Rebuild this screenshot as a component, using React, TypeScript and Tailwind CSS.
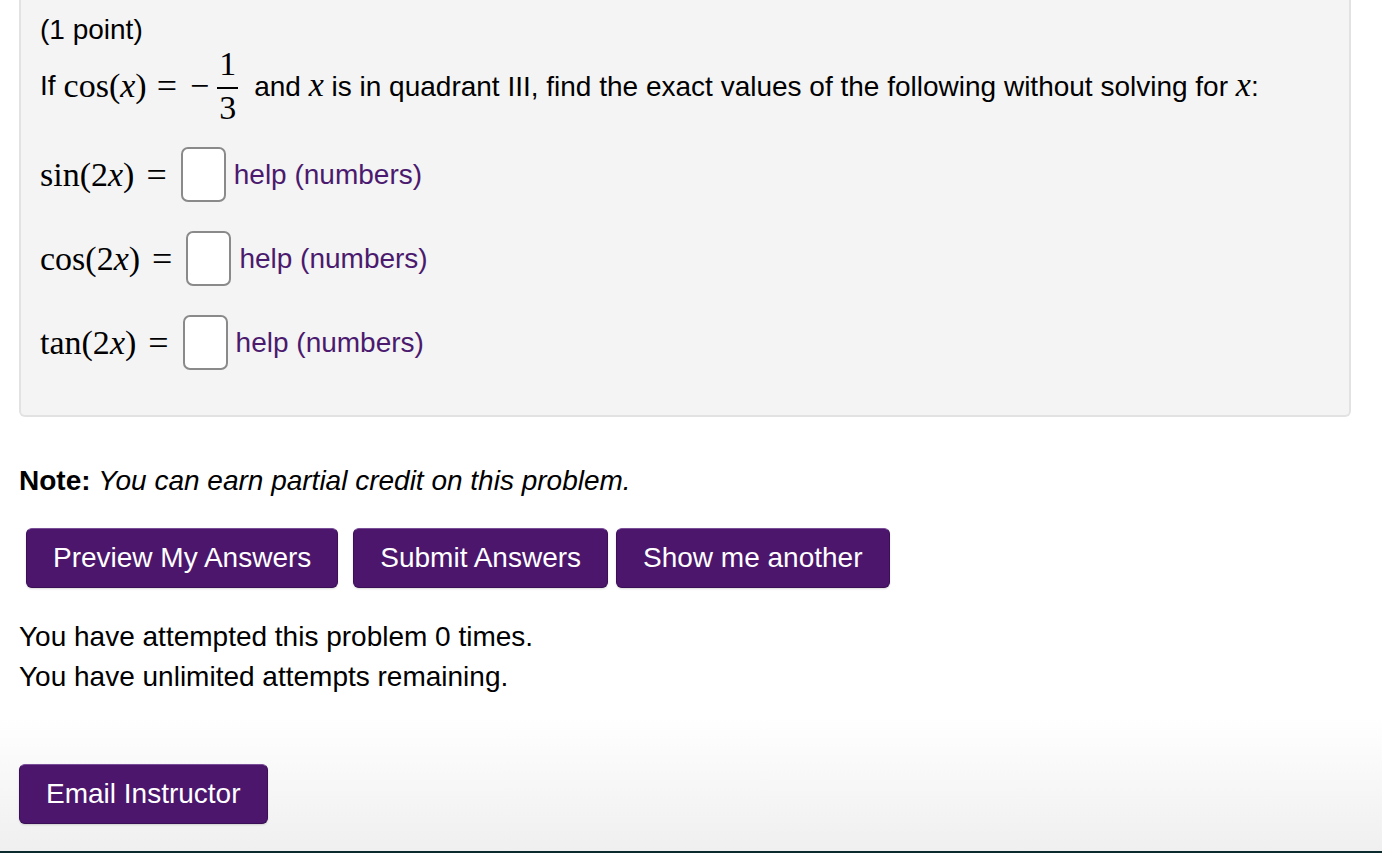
import React from "react";

const sans = "font-['Liberation_Sans',Arial,sans-serif]";
const serif = "font-['Liberation_Serif','Times_New_Roman',serif]";

function V({ children }: { children: React.ReactNode }) {
  return <span className={`${serif} italic`}>{children}</span>;
}

function AnswerRow({ fn }: { fn: string }) {
  return (
    <div className="flex h-[55px] items-center">
      <span className={`${serif} text-[34px] leading-none text-black`}>
        {fn}(2<V>x</V>)
      </span>
      <span className={`${serif} ml-[12px] mr-[14px] text-[36px] leading-none`}>=</span>
      <input
        type="text"
        className="h-[55px] w-[45px] rounded-[7px] border-2 border-[#8a8a8a] bg-white outline-none"
      />
      <a href="#" className="ml-2 text-[#4b1a6e]">
        help (numbers)
      </a>
    </div>
  );
}

function PurpleButton({ label, className = "" }: { label: string; className?: string }) {
  return (
    <button
      className={`h-[60px] rounded-[6px] border border-[#3a0f56] border-t-[#7a4d98] bg-[#4b166c] px-[26px] text-[28px] text-white shadow-[0_1px_2px_rgba(0,0,0,0.15)] ${className}`}
    >
      {label}
    </button>
  );
}

export default function App() {
  return (
    <div
      className={`${sans} relative min-h-[853px] overflow-hidden bg-gradient-to-b from-white from-[84%] to-[#efefef] text-[28px] leading-[40px] text-black`}
    >
      {/* problem box */}
      <div className="ml-[19px] w-[1332px] rounded-b-[6px] border-2 border-t-0 border-[#e2e2e2] bg-[#f4f4f4] px-[19px] pb-[45px] pt-[10px]">
        <div>(1 point)</div>

        <div className="flex h-[72px] items-center">
          <span>If</span>
          <span className={`${serif} ml-[8px] text-[34px] leading-none`}>
            cos(<V>x</V>)
          </span>
          <span className={`${serif} ml-[10px] mr-[13px] text-[36px] leading-none`}>=</span>
          <span className={`${serif} text-[34px] leading-none`}>−</span>
          <span className={`${serif} ml-[8px] inline-flex flex-col items-center text-[34px] leading-[34px]`}>
            <span className="px-[2px] pb-[6px]">1</span>
            <span className="h-[2px] w-full bg-black" />
            <span className="px-[2px] pt-[2px]">3</span>
          </span>
          <span className="ml-[16px]">
            and <V><span className="text-[34px]">x</span></V> is in quadrant III, find the exact values of the
            following without solving for <V><span className="text-[34px]">x</span></V>:
          </span>
        </div>

        <div className="mt-[25px] flex flex-col gap-[29px]">
          <AnswerRow fn="sin" />
          <AnswerRow fn="cos" />
          <AnswerRow fn="tan" />
        </div>
      </div>

      {/* note */}
      <div className="ml-[19px] mt-[44px]">
        <b>Note:</b> <i>You can earn partial credit on this problem.</i>
      </div>

      {/* actions */}
      <div className="ml-[26px] mt-[27px] flex items-center">
        <PurpleButton label="Preview My Answers" />
        <PurpleButton label="Submit Answers" className="ml-[15px]" />
        <PurpleButton label="Show me another" className="ml-[8px]" />
      </div>

      <div className="ml-[19px] mt-[29px]">
        <div>You have attempted this problem 0 times.</div>
        <div>You have unlimited attempts remaining.</div>
      </div>

      <div className="ml-[19px] mt-[67px]">
        <PurpleButton label="Email Instructor" />
      </div>

      <div className="absolute bottom-0 left-0 h-[2px] w-full bg-[#0b2a2d]" />
    </div>
  );
}
